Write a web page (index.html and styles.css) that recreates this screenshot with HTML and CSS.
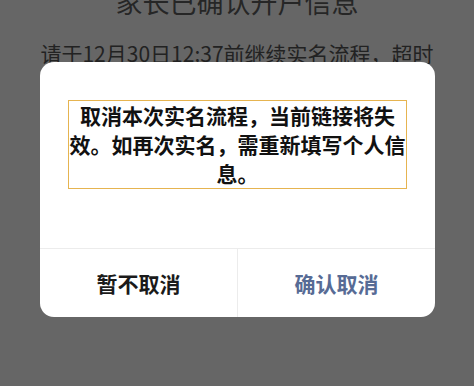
FILE: index.html
```html
<!DOCTYPE html>
<html lang="zh-CN">
<head>
<meta charset="utf-8">
<title>取消实名</title>
<link rel="stylesheet" href="styles.css">
</head>
<body>
<main class="page">
  <h1 class="title">家长已确认开户信息</h1>
  <p class="desc">请于12月30日12:37前继续实名流程，超时</p>
</main>
<div class="dialog">
  <div class="dialog-body">
    <div class="message">取消本次实名流程，当前链接将失效。如再次实名，需重新填写个人信息。</div>
  </div>
  <div class="dialog-actions">
    <button class="btn btn-default">暂不取消</button>
    <button class="btn btn-primary">确认取消</button>
  </div>
</div>
</body>
</html>
```
FILE: styles.css
```css
html, body {
  margin: 0;
  padding: 0;
  height: 100%;
}
body {
  background: #666666;
  font-family: "Noto Sans CJK SC", "Noto Sans", sans-serif;
  overflow: hidden;
  position: relative;
}
.page {
  display: flex;
  flex-direction: column;
  align-items: center;
}
.title {
  margin: -17px 0 0;
  font-size: 27px;
  font-weight: 400;
  line-height: 38px;
  color: #262626;
}
.desc {
  margin: 17px 0 0;
  font-size: 21px;
  line-height: 30px;
  color: #222222;
  white-space: nowrap;
}
.dialog {
  position: absolute;
  left: 40px;
  top: 62px;
  width: 395px;
  background: #ffffff;
  border-radius: 14px;
  overflow: hidden;
}
.dialog-body {
  padding: 38px 28px 59px 28px;
}
.message {
  border: 1px solid #e6b450;
  font-size: 21px;
  line-height: 29px;
  font-weight: 700;
  color: #111111;
  text-align: center;
}
.dialog-actions {
  display: flex;
  border-top: 1px solid #ececec;
}
.btn {
  flex: 1;
  height: 68px;
  border: 0;
  background: transparent;
  font-family: inherit;
  font-size: 21px;
  font-weight: 700;
  padding: 0;
}
.btn + .btn {
  border-left: 1px solid #ececec;
}
.btn-default {
  color: #1a1a1a;
}
.btn-primary {
  color: #576b95;
}
```
